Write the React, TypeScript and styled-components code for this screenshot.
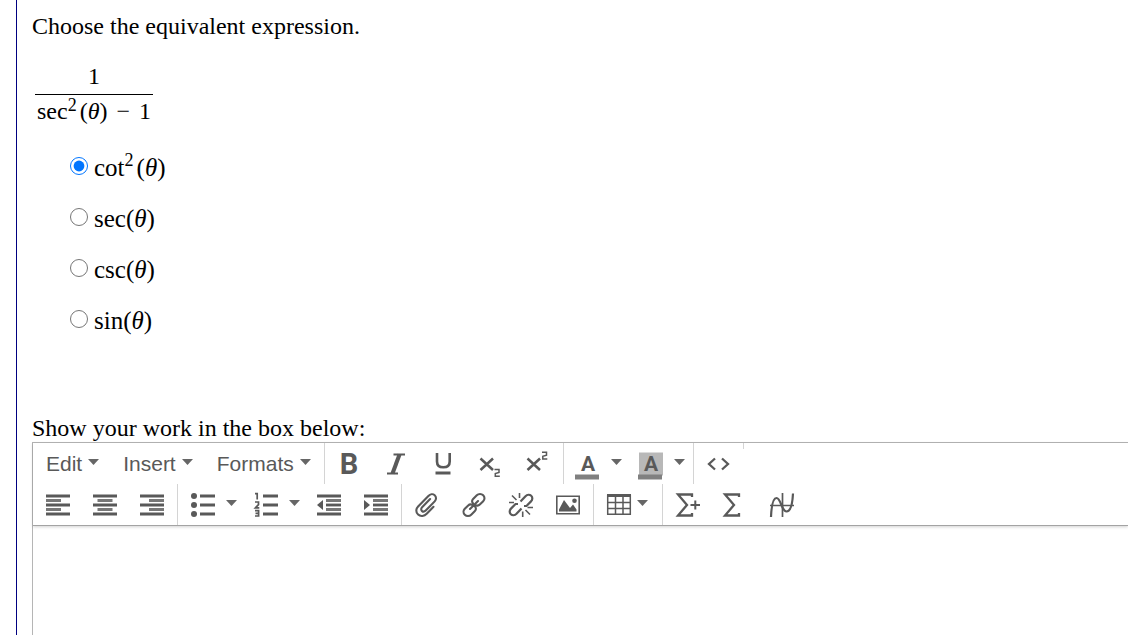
import React, { useState } from "react";
import styled, { createGlobalStyle } from "styled-components";

const ink = "#595959";
const sans = `"Liberation Sans", Arial, sans-serif`;
const serif = `"Liberation Serif", "Times New Roman", serif`;

const GlobalStyle = createGlobalStyle`
  *, *::before, *::after { box-sizing: border-box; }
  body { margin: 0; background: #fff; color: #000; overflow-x: hidden; }
`;

const Page = styled.main`
  display: flex;
  flex-direction: column;
  min-height: 100vh;
  margin-left: 16px;
  padding: 12px 0 0 15px;
  border-left: 1px solid #000080;
  font-family: ${serif};
  font-size: 24px;
  line-height: 28px;
`;

const Prompt = styled.p`
  margin: 0;
`;

const Fraction = styled.div`
  display: flex;
  flex-direction: column;
  align-self: flex-start;
  margin: 22px 0 0 3px;
  text-align: center;
`;

const Numerator = styled.div`
  padding-bottom: 4px;
`;

const Denominator = styled.div`
  padding: 2px 2px 0;
  border-top: 1px solid #000;
`;

const Power = styled.sup<{ $raised?: boolean }>`
  margin-right: 3px;
  font-size: 18px;
  line-height: 0;
  vertical-align: ${(p) => (p.$raised ? 10 : 8)}px;
`;

const Operator = styled.span`
  margin: 0 9px;
`;

const Choices = styled.fieldset`
  display: grid;
  gap: 23px;
  margin: 29px 0 0;
  padding: 0 0 0 38px;
  border: 0;
`;

const Choice = styled.label`
  display: flex;
  align-items: flex-start;
  gap: 6px;
  font-size: 25px;
`;

const Radio = styled.input`
  width: 18px;
  height: 18px;
  margin: 3px 0 0;
`;

const WorkLabel = styled.label`
  margin-top: 79px;
`;

const Editor = styled.section`
  display: flex;
  flex: 1;
  flex-direction: column;
  border: solid #b5b5b5;
  border-width: 1px 0 0 1px;
`;

const Toolbar = styled.div`
  border-bottom: 1px solid #a3a3a3;
  box-shadow: 0 1px 3px rgba(0, 0, 0, 0.18);
`;

const ToolRow = styled.div`
  display: flex;
  height: 41px;
`;

const Group = styled.div<{ $last?: boolean; $flush?: boolean; $menus?: boolean }>`
  display: flex;
  padding: ${(p) => (p.$flush ? "0 3px 0 0" : p.$menus ? "0 1px" : "0 2px 0 1px")};
  border-right: ${(p) => (p.$last ? "0" : "1px solid #d4d4d4")};
`;

const GroupEnd = styled.div`
  width: 1px;
  height: 6px;
  margin-left: -1px;
  background: #d4d4d4;
`;

const Tool = styled.button<{ $kind?: "split" | "menu" }>`
  display: flex;
  align-items: center;
  gap: ${(p) => (p.$kind === "split" ? 11 : 6)}px;
  padding: 0 ${(p) => (p.$kind === "split" ? 5 : p.$kind === "menu" ? 12 : 11)}px 0 12px;
  border: 0;
  background: none;
  color: ${ink};
  font-family: ${sans};
  font-size: 21px;
  line-height: 24px;
  white-space: nowrap;
`;

const Icon = styled.svg`
  display: block;
  flex: none;
  width: 24px;
  height: 24px;
  overflow: visible;
  fill: none;
  stroke: ${ink};
  stroke-width: 2;

  text { fill: ${ink}; stroke: none; }
`;

const CaretMark = styled.svg`
  display: block;
  flex: none;
  width: 11px;
  height: 6px;
  margin-bottom: 4px;
  fill: #666;
`;

const WorkArea = styled.textarea`
  flex: 1;
  min-height: 80px;
  padding: 12px;
  border: 0;
  outline: 0;
  resize: none;
  background: transparent;
  font: inherit;
`;

const Caret = () => (
  <CaretMark viewBox="0 0 11 6" aria-hidden="true">
    <path d="M0 0h11L5.5 6z" />
  </CaretMark>
);

const icons: Record<string, React.ReactNode> = {
  bold: <text x="11" y="22" textAnchor="middle" fontFamily="Roboto, sans-serif" fontWeight="700" fontSize="29">B</text>,
  italic: (
    <>
      <path d="M8.500 2.500H20M2 21.500h11" strokeWidth="2" />
      <path d="M14.500 2.500L7.500 21.500" strokeWidth="4" />
    </>
  ),
  underline: (
    <>
      <path d="M5 1v8.500c0 4 2.200 5.800 6.300 5.800s6.400-1.800 6.400-5.800V1" strokeWidth="2.600" />
      <path d="M3.500 21h15" strokeWidth="3" />
    </>
  ),
  subscript: (
    <>
      <path d="M1.500 6.500l12.500 11.500M14 6.500L1.500 18" strokeWidth="2.500" />
      <path d="M15.500 17.500h4.500v3l-3.700 1v2.800h4.500" strokeWidth="1.500" />
    </>
  ),
  superscript: (
    <>
      <path d="M1.500 6.500l12.500 11.500M14 6.500L1.500 18" strokeWidth="2.500" />
      <path d="M16 .3h4.500v3l-3.700 1v2.800h4.500" strokeWidth="1.500" />
    </>
  ),
  color: (
    <>
      <text x="12" y="19" textAnchor="middle" fontFamily="Roboto, sans-serif" fontWeight="700" fontSize="21">A</text>
      <path d="M-1 25h24" stroke="#808080" strokeWidth="5" />
    </>
  ),
  background: (
    <>
      <path d="M0 .5h24v23H0z" fill="#b8b8b8" stroke="none" />
      <text x="12" y="19" textAnchor="middle" fontFamily="Roboto, sans-serif" fontWeight="700" fontSize="21">A</text>
      <path d="M-1 25h24" stroke="#808080" strokeWidth="5" />
    </>
  ),
  code: <path d="M8 6.500L2 12l6 5.500M15 6.500l6 5.500-6 5.500" strokeWidth="2.300" />,
  left: (
    <>
      <path d="M0 3h24M0 12h24M0 21h24" strokeWidth="3" />
      <path d="M0 7.500h15M0 16.500h15" strokeWidth="3" stroke="#777" />
    </>
  ),
  center: (
    <>
      <path d="M0 3h24M0 12h24M0 21h24" strokeWidth="3" />
      <path d="M4.500 7.500h15M4.500 16.500h15" strokeWidth="3" stroke="#777" />
    </>
  ),
  right: (
    <>
      <path d="M0 3h24M0 12h24M0 21h24" strokeWidth="3" />
      <path d="M9 7.500h15M9 16.500h15" strokeWidth="3" stroke="#777" />
    </>
  ),
  bullets: (
    <>
      <path d="M9 3h15M9 12h15M9 21h15" strokeWidth="3" />
      <g fill={ink} stroke="none">
        <circle cx="3" cy="3" r="3" /><circle cx="3" cy="12" r="3" /><circle cx="3" cy="21" r="3" />
      </g>
    </>
  ),
  numbers: (
    <>
      <path d="M9 3h15M9 12h15M9 21h15" strokeWidth="3" />
      <path d="M1 .7h2.200v5.800M1 9h3.500v2.600L1.400 14.800H5.300M1 17.700h3.600v5.300H1M1.500 20.300h3" strokeWidth="1.700" />
    </>
  ),
  outdent: (
    <>
      <path d="M0 3h24M0 21h24" strokeWidth="3" />
      <path d="M9 7.500h15M9 12h15M9 16.500h15" strokeWidth="3" stroke="#777" />
      <path d="M9 12h15" strokeWidth="2" />
      <path d="M6 7v10l-6-5z" fill={ink} stroke="none" />
    </>
  ),
  indent: (
    <>
      <path d="M0 3h24M0 21h24" strokeWidth="3" />
      <path d="M9 7.500h15M9 12h15M9 16.500h15" strokeWidth="3" stroke="#777" />
      <path d="M9 12h15" strokeWidth="2" />
      <path d="M0 7v10l6-5z" fill={ink} stroke="none" />
    </>
  ),
  clip: (
    <path d="M18.500 13.800l-6.800 7c-2.400 2.500-6.200 3-8.600.8s-2.300-5.800 0-8.200L13.400 2.900c1.800-1.900 4.500-2.300 6.300-.7s1.700 4.400 0 6.200l-9 9.200c-1.100 1.100-2.800 1.300-3.800.3s-.9-2.600.2-3.700l8-8.200" strokeWidth="2.100" strokeLinecap="round" />
  ),
  link: (
    <g strokeWidth="2.100" strokeLinecap="round">
      <path d="M11.300 10.700c-1.600-1.500-1.600-3.300-.2-4.700l3.700-3.700c1.700-1.700 4.700-1.700 6.400 0s1.700 4.300 0 6l-3.400 3.300c-1.200 1.200-2.900 1.200-4.100.6" />
      <path d="M12.700 13.300c1.600 1.500 1.600 3.300.2 4.700l-3.700 3.700c-1.700 1.700-4.700 1.700-6.400 0s-1.700-4.300 0-6l3.400-3.300c1.200-1.200 2.900-1.200 4.100-.6M8 16l8-8" />
    </g>
  ),
  unlink: (
    <>
      <path d="M11.500 8.500l5-5.300c1.700-1.700 4.200-1.800 5.700-.4s1.500 3.900-.2 5.600l-4.500 4.600h-2.500M12.500 15.500l-5 5.300c-1.700 1.700-4.200 1.800-5.700.4s-1.500-3.900.2-5.600l4.500-4.600h2.500" strokeWidth="2.200" />
      <path d="M10.500 0v5M3 2.500l4.500 4.500M0 9.500h5M18.500 14.500h5.500M16.500 17l4.500 4.500M13.700 18.500V24" strokeWidth="1.600" />
    </>
  ),
  image: (
    <>
      <path d="M.8 3.200h22.400v17.600H.8z" strokeWidth="1.600" />
      <path d="M3 18.500v-2L8 7l6 8 3-3.500 3.500 5v2z" fill={ink} stroke="none" />
      <circle cx="18.500" cy="7.800" r="2.300" fill={ink} stroke="none" />
    </>
  ),
  table: (
    <>
      <path d="M.7 2.500h22.600v18.800H.7zM8.500 3v18M16 3v18M1 9.500h22M1 15.500h22" strokeWidth="1.500" />
      <path d="M0 2.500h24" strokeWidth="3" />
    </>
  ),
  sumPlus: (
    <>
      <path d="M16 4V1.500H2L11 12 2 22.500H16V20" strokeWidth="2.300" />
      <path d="M14.500 12H24M19.300 7.500v9" strokeWidth="2" />
    </>
  ),
  sum: <path d="M16 4V1.500H2L11 12 2 22.500H16V20" strokeWidth="2.300" />,
  graph: (
    <>
      <path d="M0 12.500h24M12.500 0v24" strokeWidth="1.700" />
      <path d="M1 24C1.500 12 3.500 5 6.500 5c4.500 0 5 13.500 10 13.500 4 0 6-8 6.500-18" strokeWidth="2.200" />
    </>
  ),
};

type ToolDef = [icon: string, label: string, kind?: "split" | "menu"];

const Tools = ({ items, flush, last }: { items: ToolDef[]; flush?: boolean; last?: boolean }) => (
  <Group $flush={flush} $last={last}>
    {items.map(([icon, label, kind]) => (
      <Tool key={icon} type="button" aria-label={label} $kind={kind}>
        <Icon viewBox="0 0 24 24" aria-hidden="true">{icons[icon]}</Icon>
        {kind && <Caret />}
      </Tool>
    ))}
  </Group>
);

const choices = [
  { name: "cot", squared: true },
  { name: "sec" },
  { name: "csc" },
  { name: "sin" },
];

const Trig = ({ name, squared, raised }: { name: string; squared?: boolean; raised?: boolean }) => (
  <span>
    {name}
    {squared && <Power $raised={raised}>2</Power>}(<i>θ</i>)
  </span>
);

export default function App() {
  const [answer, setAnswer] = useState("cot");

  return (
    <>
      <GlobalStyle />
      <Page>
        <Prompt>Choose the equivalent expression.</Prompt>
        <Fraction>
          <Numerator>1</Numerator>
          <Denominator>
            <Trig name="sec" squared />
            <Operator>−</Operator>1
          </Denominator>
        </Fraction>
        <Choices aria-label="Equivalent expression">
          {choices.map((choice) => (
            <Choice key={choice.name}>
              <Radio
                type="radio"
                name="answer"
                checked={answer === choice.name}
                onChange={() => setAnswer(choice.name)}
              />
              <Trig {...choice} raised />
            </Choice>
          ))}
        </Choices>
        <WorkLabel htmlFor="work">Show your work in the box below:</WorkLabel>
        <Editor>
          <Toolbar role="toolbar" aria-label="Formatting">
            <ToolRow>
              <Group $menus>
                {["Edit", "Insert", "Formats"].map((menu) => (
                  <Tool key={menu} type="button" $kind="menu">
                    {menu}
                    <Caret />
                  </Tool>
                ))}
              </Group>
              <Tools
                items={[
                  ["bold", "Bold"],
                  ["italic", "Italic"],
                  ["underline", "Underline"],
                  ["subscript", "Subscript"],
                  ["superscript", "Superscript"],
                ]}
              />
              <Tools flush items={[["color", "Text color", "split"], ["background", "Background color", "split"]]} />
              <Tools last items={[["code", "Source code"]]} />
              <GroupEnd />
            </ToolRow>
            <ToolRow>
              <Tools items={[["left", "Align left"], ["center", "Align center"], ["right", "Align right"]]} />
              <Tools
                items={[
                  ["bullets", "Bullet list", "split"],
                  ["numbers", "Numbered list", "split"],
                  ["outdent", "Decrease indent"],
                  ["indent", "Increase indent"],
                ]}
              />
              <Tools
                items={[
                  ["clip", "Attach file"],
                  ["link", "Insert link"],
                  ["unlink", "Remove link"],
                  ["image", "Insert image"],
                ]}
              />
              <Tools items={[["table", "Table", "menu"]]} />
              <Tools last items={[["sumPlus", "Insert equation"], ["sum", "Edit equation"], ["graph", "Insert graph"]]} />
            </ToolRow>
          </Toolbar>
          <WorkArea id="work" />
        </Editor>
      </Page>
    </>
  );
}
